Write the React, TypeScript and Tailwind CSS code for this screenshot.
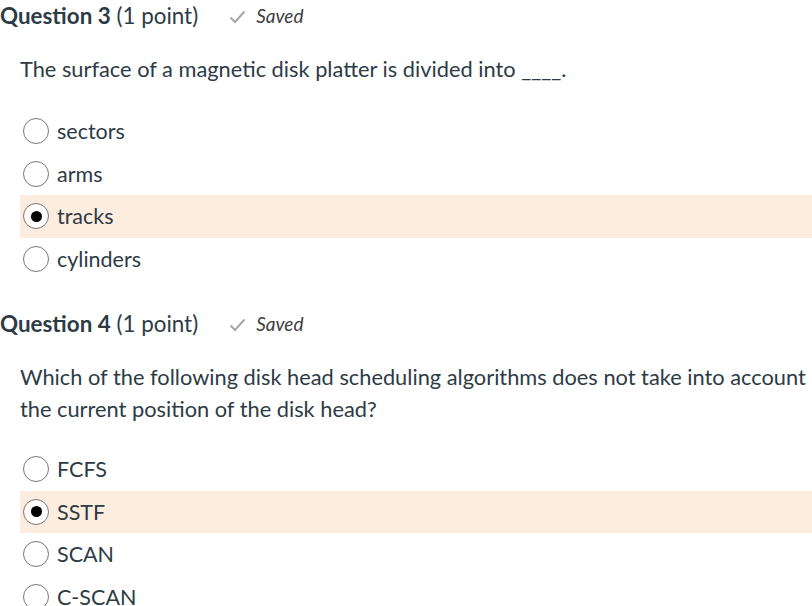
const questions = [
  {
    number: 3,
    text: "The surface of a magnetic disk platter is divided into ____.",
    options: ["sectors", "arms", "tracks", "cylinders"],
    selected: 2,
  },
  {
    number: 4,
    text: "Which of the following disk head scheduling algorithms does not take into account the current position of the disk head?",
    options: ["FCFS", "SSTF", "SCAN", "C-SCAN"],
    selected: 1,
  },
];

export default function App() {
  return (
    <div
      className="w-[812px] h-[606px] overflow-hidden bg-white text-[#2d3b45]"
      style={{ fontFamily: "Lato, 'Noto Sans', sans-serif" }}
    >
      {questions.map((q, i) => (
        <Question key={q.number} {...q} first={i === 0} />
      ))}
    </div>
  );
}

function Question({
  number,
  text,
  options,
  selected,
  first,
}: {
  number: number;
  text: string;
  options: string[];
  selected: number;
  first: boolean;
}) {
  return (
    <section className={first ? "" : "mt-[28px]"}>
      {/* Header */}
      <header className="flex items-center h-[33px]">
        <h2 className="text-[22.4px] leading-none">
          <span className="font-bold">Question {number}</span> (1 point)
        </h2>
        <span className="ml-[31px] flex items-center gap-[10px]">
          <svg width="17" height="14" viewBox="0 0 17 14" fill="none">
            <path d="M1.5 7.5 L6 12 L15.5 1.5" stroke="#a6a6a6" strokeWidth="2" />
          </svg>
          <span className="italic text-[19px] text-[#3d3d3d]">Saved</span>
        </span>
      </header>

      <div className="pl-5">
        <p className="text-[21.8px] leading-[32px] mt-[20px]">{text}</p>

        <ul className={`${first ? "mt-[25px]" : "mt-[23px]"} flex flex-col`}>
          {options.map((opt, idx) => (
            <li
              key={opt}
              className={`flex items-center h-[42.5px] ${
                idx === selected ? "bg-[#fdeddf]" : ""
              }`}
            >
              <span className="ml-[3px] w-[26px] h-[26px] rounded-full border border-[#777] bg-white flex items-center justify-center">
                {idx === selected && (
                  <span className="w-[11px] h-[11px] rounded-full bg-black" />
                )}
              </span>
              <span className="ml-[8px] text-[21.5px]">{opt}</span>
            </li>
          ))}
        </ul>
      </div>
    </section>
  );
}
